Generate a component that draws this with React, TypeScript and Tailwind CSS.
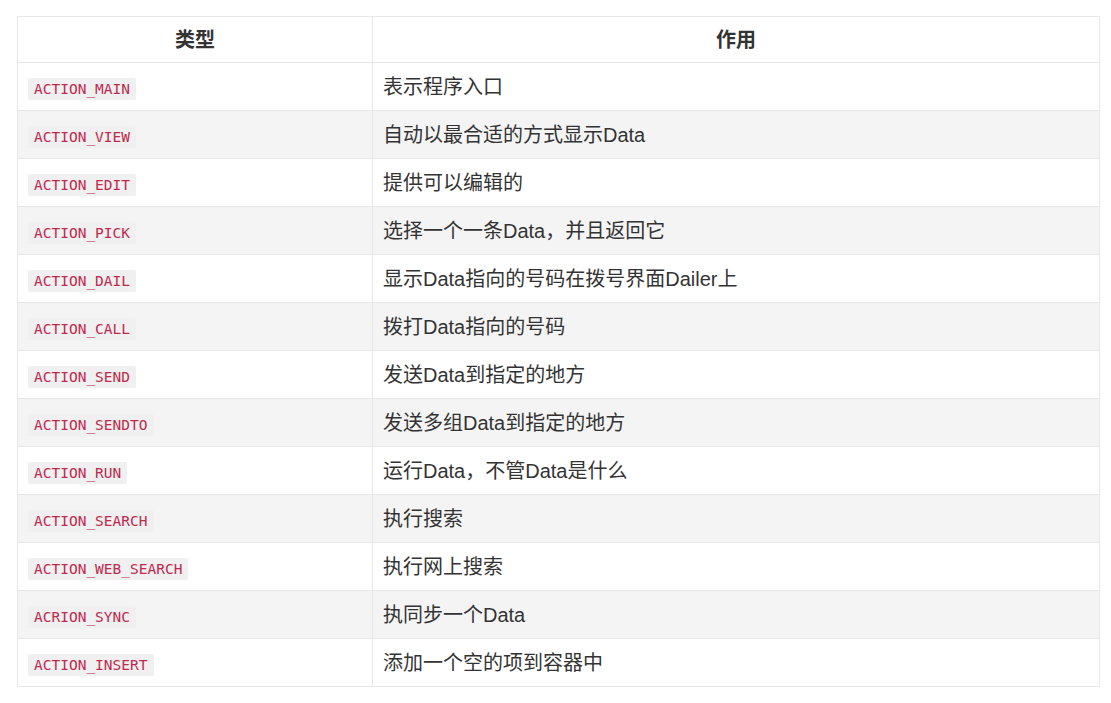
import React from 'react';

const rows: Array<[string, string]> = [
  ['ACTION_MAIN', '表示程序入口'],
  ['ACTION_VIEW', '自动以最合适的方式显示Data'],
  ['ACTION_EDIT', '提供可以编辑的'],
  ['ACTION_PICK', '选择一个一条Data，并且返回它'],
  ['ACTION_DAIL', '显示Data指向的号码在拨号界面Dailer上'],
  ['ACTION_CALL', '拨打Data指向的号码'],
  ['ACTION_SEND', '发送Data到指定的地方'],
  ['ACTION_SENDTO', '发送多组Data到指定的地方'],
  ['ACTION_RUN', '运行Data，不管Data是什么'],
  ['ACTION_SEARCH', '执行搜索'],
  ['ACTION_WEB_SEARCH', '执行网上搜索'],
  ['ACRION_SYNC', '执同步一个Data'],
  ['ACTION_INSERT', '添加一个空的项到容器中'],
];

const App: React.FC = () => {
  return (
    <div className="min-h-screen bg-white pt-4 pl-[17px] font-['Liberation_Sans','Noto_Sans_CJK_SC',sans-serif] text-[#333]">
      <table className="w-[1083px] table-fixed border-collapse text-[20px]">
        <colgroup>
          <col className="w-[355px]" />
          <col />
        </colgroup>
        <thead>
          <tr className="h-[46px]">
            <th className="border border-[#e8e8e8] text-center font-bold leading-none">类型</th>
            <th className="border border-[#e8e8e8] text-center font-bold leading-none">作用</th>
          </tr>
        </thead>
        <tbody>
          {rows.map(([code, desc], i) => (
            <tr key={code} className={`h-[48px] ${i % 2 === 1 ? 'bg-[#f4f4f4]' : 'bg-white'}`}>
              <td className="border border-[#e8e8e8] px-[10px] leading-none">
                <code className="rounded-[2px] bg-[#f0f0f0] px-[6px] py-[3px] font-['DejaVu_Sans_Mono',monospace] text-[14.5px] text-[#bf2a4f]">
                  {code}
                </code>
              </td>
              <td className="border border-[#e8e8e8] px-[10px] leading-none">{desc}</td>
            </tr>
          ))}
        </tbody>
      </table>
    </div>
  );
};

export default App;
